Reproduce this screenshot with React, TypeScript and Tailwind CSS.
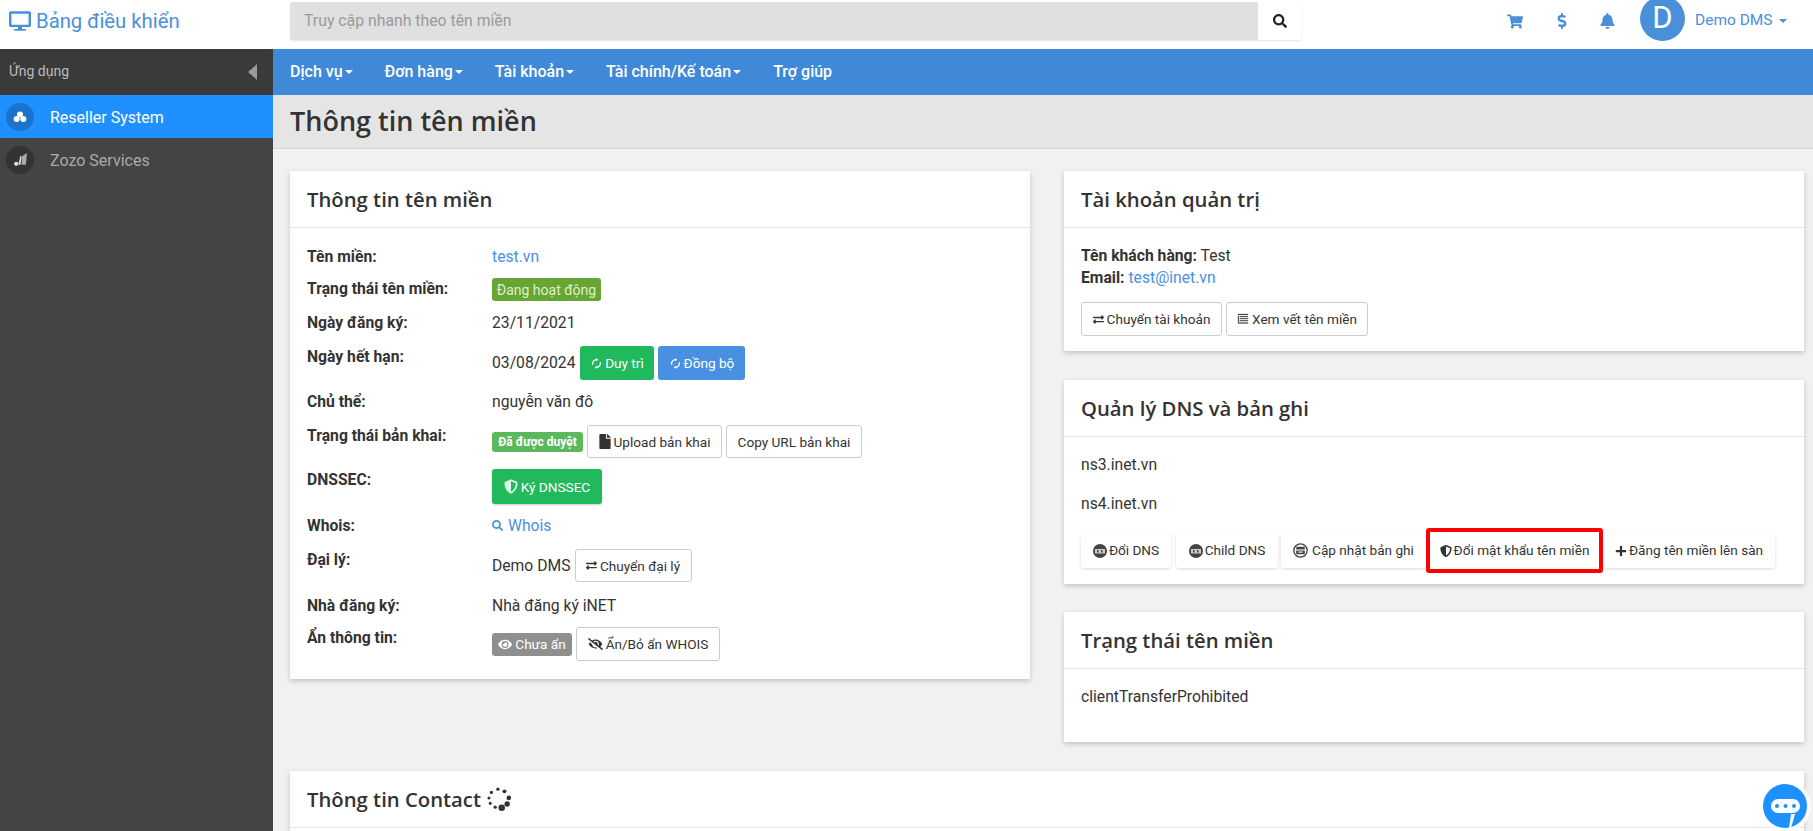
import React from "react";
import { FaDesktop, FaSearch, FaShoppingCart, FaDollarSign, FaBell, FaEye, FaEyeSlash, FaExchangeAlt, FaFile, FaShieldAlt, FaPlus } from "react-icons/fa";

const Caret = ({ className = "" }: { className?: string }) => (
  <span className={"inline-block w-0 h-0 border-x-[4px] border-x-transparent border-t-[4px] border-t-current " + className} />
);

const Btn = ({ children, className = "" }: { children: React.ReactNode; className?: string }) => (
  <span className={"inline-flex items-center justify-center gap-[3px] whitespace-nowrap rounded-[3px] border border-[#ccc] bg-white text-[13.6px] text-[#333] " + className}>
    {children}
  </span>
);

const Card = ({ title, extra, children, className = "" }: { title: string; extra?: React.ReactNode; children?: React.ReactNode; className?: string }) => (
  <section className={"bg-white shadow-[0_2px_5px_rgba(0,0,0,0.2)] " + className}>
    <div className="flex h-[57px] items-center gap-[6px] border-b border-[#e3e3e3] px-[17px] font-['Open_Sans',sans-serif] text-[20.3px] font-semibold text-[#333]">
      {title}
      {extra}
    </div>
    {children}
  </section>
);

const Refresh = () => (
  <svg viewBox="0 0 12 12" className="h-[11px] w-[11px]" fill="none" stroke="currentColor" strokeWidth="1.4">
    <path d="M2 7.5 A4.2 4.2 0 0 1 6 1.8" />
    <path d="M10 4.5 A4.2 4.2 0 0 1 6 10.2" />
    <path d="M5.5 0 L8 1.8 L5.5 3.6 Z" fill="currentColor" stroke="none" />
    <path d="M6.5 8.4 L4 10.2 L6.5 12 Z" fill="currentColor" stroke="none" />
  </svg>
);

const DnsIcon = () => (
  <svg viewBox="0 0 14 14" className="h-[14px] w-[14px]">
    <circle cx="7" cy="7" r="7" fill="#444" />
    <rect x="2" y="5" width="10" height="4.5" fill="#ccc" />
    <rect x="4" y="6" width="1.5" height="2.5" fill="#444" />
    <rect x="8" y="6" width="1.5" height="2.5" fill="#444" />
  </svg>
);

const RecordIcon = () => (
  <svg viewBox="0 0 14 14" className="h-[15px] w-[15px]">
    <circle cx="7" cy="7" r="6.2" fill="#fff" stroke="#444" strokeWidth="1.3" />
    <rect x="3" y="3.5" width="8" height="2.5" fill="#444" />
    <rect x="3" y="7" width="8" height="3.5" fill="#444" />
    <rect x="5" y="8" width="4" height="1" fill="#fff" />
  </svg>
);

const LogIcon = () => (
  <svg viewBox="0 0 14 14" className="h-[12px] w-[12px]" fill="#444">
    <rect x="1" y="1" width="12" height="1.4" />
    <rect x="3" y="3.6" width="10" height="1.2" />
    <rect x="3" y="6" width="10" height="1.2" />
    <rect x="3" y="8.4" width="10" height="1.2" />
    <rect x="1" y="11" width="12" height="1.4" />
    <rect x="1" y="3" width="1.2" height="8" />
  </svg>
);

const Row = ({ label, className = "", children }: { label: string; className?: string; children: React.ReactNode }) => (
  <div className={"flex items-start " + className}>
    <div className="h-5 w-[185px] shrink-0 pt-px text-[15.7px] font-bold leading-5 text-[#333]">{label}</div>
    <div className="flex items-center gap-[4px] text-[15.7px] leading-5 text-[#333]">{children}</div>
  </div>
);

const Val = ({ children, className = "" }: { children: React.ReactNode; className?: string }) => (
  <span className={"block h-5 pt-px " + className}>{children}</span>
);

const Spinner = () => {
  const dots = [
    [20, 10, 2.1], [18.5, 15.5, 2.5], [13.5, 19, 3], [7.5, 18.5, 1.5], [3, 15, 1.4], [1.8, 10, 1.4], [4, 5, 1.5], [10, 2, 1.5], [16, 4, 1.8],
  ];
  return (
    <svg viewBox="0 0 22 22" className="h-[24px] w-[24px]" fill="#333">
      {dots.map(([x, y, r], i) => (
        <circle key={i} cx={x} cy={y} r={r} />
      ))}
    </svg>
  );
};

export default function App() {
  return (
    <div className="flex h-screen w-full flex-col overflow-hidden bg-[#f1f1f1] font-[Roboto,sans-serif] text-[#333]">
      <header className="flex h-[49px] shrink-0 items-center bg-white pb-[7px]">
        <div className="flex w-[290px] shrink-0 items-center gap-[5px] pl-[9px] text-[20.3px] text-[#4a90d9]">
          <FaDesktop className="h-[20px] w-[22px]" />
          <span>Bảng điều khiển</span>
        </div>
        <div className="flex h-[38px] w-[1012px] shrink-0 rounded-[3px] shadow-[0_1px_2px_rgba(0,0,0,0.12)]">
          <div className="flex flex-1 items-center rounded-l-[3px] bg-[#e0e0e0] pl-[14px] text-[15.8px] text-[#9a9a9a]">Truy cập nhanh theo tên miền</div>
          <div className="flex w-[44px] items-center justify-center rounded-r-[3px] bg-white text-[#222]">
            <FaSearch className="h-[14px] w-[14px]" />
          </div>
        </div>
        <div className="ml-[205px] flex items-center text-[#4a90d9]">
          <FaShoppingCart className="h-[15px] w-[16px]" />
          <FaDollarSign className="ml-[33px] h-[16px] w-[12px]" />
          <FaBell className="ml-[32px] h-[16px] w-[15px]" />
          <div className="ml-[25px] -mt-[5px] flex h-[45px] w-[45px] items-center justify-center rounded-full bg-[#4a90d9] text-[31px] text-white">D</div>
          <span className="ml-[10px] text-[15.5px]">Demo DMS</span>
          <Caret className="ml-[6px]" />
        </div>
      </header>

      <div className="flex min-h-0 flex-1">
        <aside className="w-[273px] shrink-0 bg-[#444]">
          <div className="flex h-[46px] items-center justify-between bg-[#3a3a3a] pb-px pl-[9px] pr-[16px] text-[14px] text-[#bbb]">
            <span>Ứng dụng</span>
            <span className="h-0 w-0 border-y-[8px] border-r-[9px] border-y-transparent border-r-[#999]" />
          </div>
          <div className="flex h-[43px] items-center gap-[16px] bg-[#1e90ff] pl-[6px] text-[16px] text-white">
            <span className="flex h-[28px] w-[28px] items-center justify-center rounded-full bg-[#1b73cc]">
              <svg viewBox="0 0 14 14" className="h-[14px] w-[14px]" fill="#fff">
                <circle cx="7" cy="4.5" r="3" />
                <circle cx="3.7" cy="9" r="3" />
                <circle cx="10.3" cy="9" r="3" />
              </svg>
            </span>
            <span className="pt-[2px]">Reseller System</span>
          </div>
          <div className="flex h-[43px] items-center gap-[16px] pl-[6px] text-[16px] text-[#aaa]">
            <span className="flex h-[28px] w-[28px] items-center justify-center rounded-full bg-[#333]">
              <svg viewBox="0 0 14 14" className="h-[15px] w-[15px]" fill="#aaa">
                <circle cx="3" cy="11" r="2" fill="#ddd" />
                <path d="M5 12 L7 3 L8 5 L7 12 Z" fill="#ddd" />
                <path d="M8 12 L8.5 4 L13 1 L12 12 Z" />
              </svg>
            </span>
            <span className="pt-[2px]">Zozo Services</span>
          </div>
        </aside>

        <div className="flex min-w-0 flex-1 flex-col">
          <nav className="flex h-[46px] shrink-0 items-center gap-[32px] bg-[#3f89d8] pl-[17px] text-[16px] font-medium text-white">
            <span className="flex items-center gap-[2px]">Dịch vụ<Caret /></span>
            <span className="flex items-center gap-[2px]">Đơn hàng<Caret /></span>
            <span className="flex items-center gap-[2px]">Tài khoản<Caret /></span>
            <span className="flex items-center gap-[2px]">Tài chính/Kế toán<Caret /></span>
            <span>Trợ giúp</span>
          </nav>
          <div className="flex h-[54px] shrink-0 items-center border-b border-[#d5d5d5] bg-[#e5e5e5] pl-[17px] font-['Open_Sans',sans-serif] text-[27px] font-semibold text-[#333]">
            Thông tin tên miền
          </div>
          <main className="pl-[17px] pr-[9px] pt-[22px]">
            <div className="flex gap-[34px]">
              <Card title="Thông tin tên miền" className="h-[508px] w-[740px] shrink-0">
                <div className="px-[17px]">
                  <Row label="Tên miền:" className="mt-[18px]"><Val className="text-[#4a90e2]">test.vn</Val></Row>
                  <Row label="Trạng thái tên miền:" className="mt-[12px]">
                    <span className="flex h-[23px] w-[109px] items-center justify-center rounded-[3px] bg-[#67a535] text-[14px] text-[#dff0c8]">Đang hoạt động</span>
                  </Row>
                  <Row label="Ngày đăng ký:" className="mt-[11px]"><Val>23/11/2021</Val></Row>
                  <Row label="Ngày hết hạn:" className="mt-[14px]">
                    03/08/2024
                    <span className="ml-px flex h-[34px] w-[74px] items-center justify-center gap-[3px] rounded-[3px] bg-[#20b95c] text-[13.6px] text-white"><Refresh />Duy trì</span>
                    <span className="flex h-[34px] w-[87px] items-center justify-center gap-[3px] rounded-[3px] bg-[#4a90e2] text-[13.6px] text-white"><Refresh />Đồng bộ</span>
                  </Row>
                  <Row label="Chủ thể:" className="mt-[11px]"><Val>nguyễn văn đô</Val></Row>
                  <Row label="Trạng thái bản khai:" className="mt-[14px]">
                    <span className="flex h-[20px] w-[91px] items-center justify-center rounded-[3px] bg-[#5cb85c] text-[12px] font-bold text-white">Đã được duyệt</span>
                    <Btn className="h-[33px] w-[135px]"><FaFile className="h-[15px] w-[12px]" />Upload bản khai</Btn>
                    <Btn className="h-[33px] w-[136px]">Copy URL bản khai</Btn>
                  </Row>
                  <Row label="DNSSEC:" className="mt-[11px]">
                    <span className="flex h-[35px] w-[110px] items-center justify-center gap-[3px] rounded-[3px] bg-[#20b95c] text-[13.6px] text-white shadow-[0_1px_2px_rgba(0,0,0,0.2)]"><FaShieldAlt className="h-[15px] w-[14px] text-[#d9f5e3]" />Ký DNSSEC</span>
                  </Row>
                  <Row label="Whois:" className="mt-[11px]">
                    <Val className="flex items-center gap-[5px] text-[#4a90e2]"><FaSearch className="h-[11px] w-[11px]" />Whois</Val>
                  </Row>
                  <Row label="Đại lý:" className="mt-[14px]">
                    Demo DMS
                    <Btn className="h-[33px] w-[117px]"><FaExchangeAlt className="h-[11px] w-[11px]" />Chuyển đại lý</Btn>
                  </Row>
                  <Row label="Nhà đăng ký:" className="mt-[13px]"><Val>Nhà đăng ký iNET</Val></Row>
                  <Row label="Ẩn thông tin:" className="mt-[12px]">
                    <span className="flex h-[23px] w-[80px] items-center justify-center gap-[3px] rounded-[3px] bg-[#8f8f8f] text-[13.6px] text-white"><FaEye className="h-[13px] w-[14px]" />Chưa ẩn</span>
                    <Btn className="h-[34px] w-[144px]"><FaEyeSlash className="h-[12px] w-[15px]" />Ẩn/Bỏ ẩn WHOIS</Btn>
                  </Row>
                </div>
              </Card>

              <div className="flex min-w-0 flex-1 flex-col">
                <Card title="Tài khoản quản trị" className="h-[180px]">
                  <div className="px-[17px] pt-[17px] text-[15.7px] leading-[22px]">
                    <div><b className="font-bold">Tên khách hàng:</b> Test</div>
                    <div><b className="font-bold">Email:</b> <span className="text-[#4a90e2]">test@inet.vn</span></div>
                    <div className="mt-[13px] flex gap-[4px]">
                      <Btn className="h-[34px] w-[141px]"><FaExchangeAlt className="h-[11px] w-[11px]" />Chuyển tài khoản</Btn>
                      <Btn className="h-[34px] w-[142px]"><LogIcon />Xem vết tên miền</Btn>
                    </div>
                  </div>
                </Card>
                <Card title="Quản lý DNS và bản ghi" className="mt-[29px] h-[204px]">
                  <div className="px-[17px] text-[15.7px]">
                    <div className="mt-[18px] leading-5">ns3.inet.vn</div>
                    <div className="mt-[19px] leading-5">ns4.inet.vn</div>
                    <div className="mt-[19px] flex h-[35px] items-center text-[13.6px]">
                      <span className="flex h-[35px] w-[90px] items-center justify-center gap-[2px] rounded-[3px] bg-white shadow-[0_1px_3px_rgba(0,0,0,0.15)]"><DnsIcon />Đổi DNS</span>
                      <span className="ml-[5px] flex h-[35px] w-[102px] items-center justify-center gap-[2px] rounded-[3px] bg-white shadow-[0_1px_3px_rgba(0,0,0,0.15)]"><DnsIcon />Child DNS</span>
                      <span className="ml-[3px] flex h-[35px] w-[145px] items-center justify-center gap-[4px] rounded-[3px] bg-white shadow-[0_1px_3px_rgba(0,0,0,0.15)]"><RecordIcon />Cập nhật bản ghi</span>
                      <span className="flex h-[45px] w-[177px] items-center justify-center gap-[2px] rounded-[3px] border-[4px] border-[#f00] bg-white"><FaShieldAlt className="h-[14px] w-[12px]" />Đổi mật khẩu tên miền</span>
                      <span className="flex h-[35px] w-[172px] items-center justify-center gap-[2px] rounded-[3px] bg-white shadow-[0_1px_3px_rgba(0,0,0,0.15)]"><FaPlus className="h-[12px] w-[12px]" />Đăng tên miền lên sàn</span>
                    </div>
                  </div>
                </Card>
                <Card title="Trạng thái tên miền" className="mt-[28px] h-[130px]">
                  <div className="px-[17px] pt-[18px] text-[15.7px] leading-5">clientTransferProhibited</div>
                </Card>
              </div>
            </div>
            <Card title="Thông tin Contact" extra={<Spinner />} className="mt-[29px] h-[200px]" />
          </main>
        </div>
      </div>

      <div className="absolute left-[1759px] top-[780px] h-[52px] w-[52px] overflow-hidden rounded-full bg-white/70 p-[4px]">
        <svg viewBox="0 0 44 44" className="h-[44px] w-[44px]">
          <circle cx="22" cy="22" r="22" fill="#1e90ff" />
          <path d="M28 30 L26 44 L28 44 L32 30 Z" fill="#fff" />
          <rect x="8" y="15" width="29" height="14" rx="7" fill="#fff" />
          <circle cx="14" cy="22" r="2" fill="#1e90ff" />
          <circle cx="22.5" cy="22" r="2" fill="#1e90ff" />
          <circle cx="31" cy="22" r="2" fill="#1e90ff" />
        </svg>
      </div>
    </div>
  );
}
